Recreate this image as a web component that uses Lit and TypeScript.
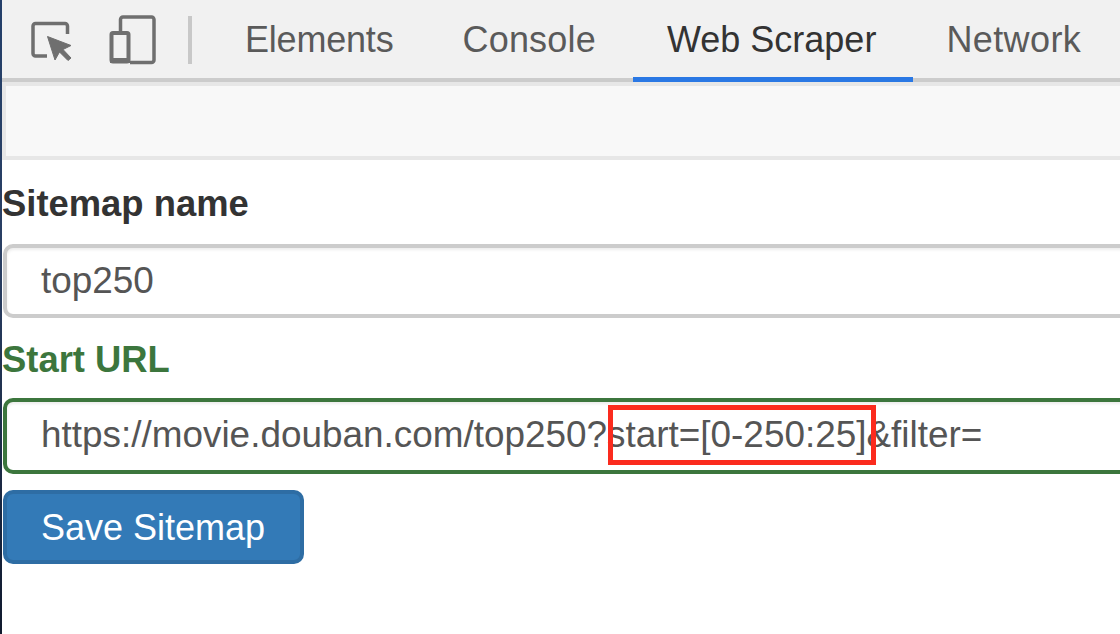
import { LitElement, html, css } from "lit";
import { customElement } from "lit/decorators.js";

@customElement("app-root")
export class AppRoot extends LitElement {
  static styles = css`
    :host {
      display: flex;
      width: 1120px;
      height: 634px;
      overflow: hidden;
      background: #fff;
      font-family: "Liberation Sans", Arial, sans-serif;
      font-size: 36px;
    }
    .strip {
      flex: 0 0 2px;
      background: linear-gradient(#24406a, #2a3f63 40%, #101a2e);
    }
    .main {
      flex: 1;
      min-width: 0;
      display: flex;
      flex-direction: column;
    }
    .toolbar {
      height: 78px;
      flex: none;
      display: flex;
      align-items: stretch;
      background: #f1f1f1;
      border-bottom: 4px solid #ccc;
    }
    .icons {
      display: block;
      flex: none;
      width: 208px;
      height: 78px;
    }
    .tab {
      padding: 2px 36px 0 35px;
      line-height: 76px;
      color: #5a5a5a;
      white-space: nowrap;
      position: relative;
    }
    .tab.elements {
      padding-right: 34px;
      letter-spacing: -0.2px;
    }
    .tab.console {
      letter-spacing: 0.2px;
    }
    .tab.active {
      margin-left: 1px;
      padding: 2px 37px 0 34px;
      color: #333;
    }
    .tab.active::after {
      content: "";
      position: absolute;
      left: 0;
      right: 0;
      bottom: -4px;
      height: 5px;
      background: #2a78e4;
    }
    .tab.network {
      padding-left: 33px;
      letter-spacing: 0.4px;
    }
    .panel {
      flex: none;
      height: 70px;
      margin-right: -8px;
      background: #f8f8f8;
      border: 4px solid #e7e7e7;
    }
    .form {
      padding: 20px 0 0 1px;
      display: flex;
      flex-direction: column;
      align-items: flex-start;
    }
    .label {
      font-weight: 700;
      font-size: 36.4px;
      line-height: 48px;
      color: #333;
      margin: 0 0 16px -1px;
    }
    .label.ok {
      color: #3c763d;
      margin-top: 18px;
      margin-bottom: 14px;
    }
    .input {
      box-sizing: border-box;
      width: 1160px;
      height: 74px;
      padding: 0 34px;
      font-size: 36.9px;
      line-height: 66px;
      color: #555;
      background: #fff;
      border: 4px solid #ccc;
      border-radius: 10px;
      box-shadow: inset 0 2px 3px rgba(0, 0, 0, 0.075);
      white-space: nowrap;
    }
    .input.ok {
      height: 76px;
      line-height: 66px;
      border-color: #3c763d;
    }
    .hl {
      position: relative;
    }
    .box {
      position: absolute;
      left: 1px;
      right: -10px;
      top: -9px;
      bottom: -10px;
      border: 5px solid #fb2b1e;
      pointer-events: none;
    }
    .save {
      box-sizing: border-box;
      margin-top: 16px;
      width: 301px;
      height: 74px;
      padding: 2px 34px 0;
      font: inherit;
      line-height: 64px;
      text-align: left;
      color: #fff;
      background: #337ab7;
      border: 4px solid #2e6da4;
      border-radius: 10px;
      white-space: nowrap;
    }
  `;

  render() {
    return html`
      <div class="strip"></div>
      <div class="main">
        <div class="toolbar">
          <svg class="icons" viewBox="2 0 208 78" fill="none">
            <path d="M47 56H35.500a2.500 2.500 0 0 1-2.500-2.500V26a2.500 2.500 0 0 1 2.500-2.500H65a2.500 2.500 0 0 1 2.500 2.500v8" stroke="#6f6f6f" stroke-width="3.500"/>
            <path d="M47.500 36.500L71 45.500 63 49.500 71 58 68 60.500 59.500 52 55 60z" fill="#6f6f6f" stroke="#6f6f6f" stroke-width="1" stroke-linejoin="round"/>
            <path d="M120.500 31V19.500a2.500 2.500 0 0 1 2.500-2.500h28.500a2.500 2.500 0 0 1 2.500 2.500v40.500a2.500 2.500 0 0 1-2.500 2.500H130" stroke="#6f6f6f" stroke-width="3.500"/>
            <path d="M113 33h14a1.500 1.500 0 0 1 1.500 1.500v25.500a1.500 1.500 0 0 1-1.500 1.500h-14a1.500 1.500 0 0 1-1.500-1.500V34.500a1.500 1.500 0 0 1 1.500-1.500z" stroke="#6f6f6f" stroke-width="4"/>
            <rect x="110" y="58" width="20" height="5" fill="#6f6f6f"/>
            <rect x="188" y="16" width="4" height="48" fill="#c8c8c8"/>
          </svg>
          <div class="tab elements">Elements</div>
          <div class="tab console">Console</div>
          <div class="tab active">Web Scraper</div>
          <div class="tab network">Network</div>
        </div>
        <div class="panel"></div>
        <div class="form">
          <div class="label">Sitemap name</div>
          <div class="input">top250</div>
          <div class="label ok">Start URL</div>
          <div class="input ok">https://movie.douban.com/top250?<span class="hl">start=[0-250:25]<span class="box"></span></span>&amp;filter=</div>
          <div class="save">Save Sitemap</div>
        </div>
      </div>
    `;
  }
}
